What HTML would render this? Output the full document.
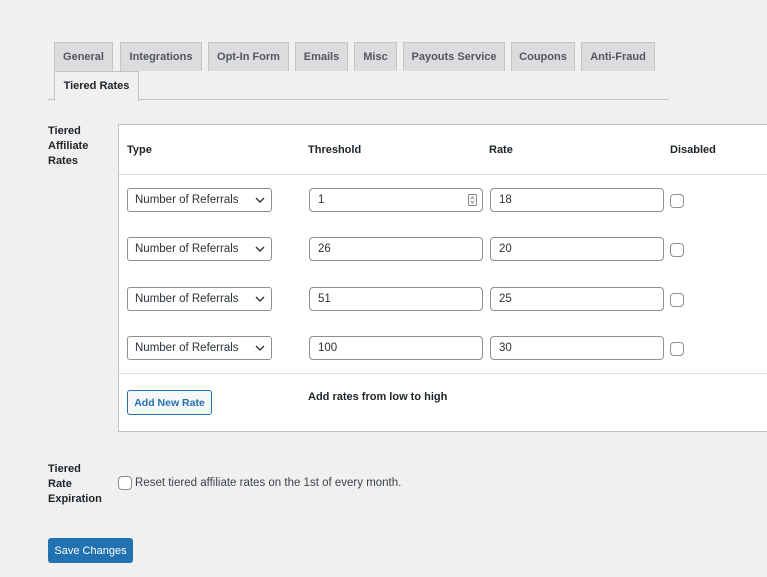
<!DOCTYPE html>
<html><head><meta charset="utf-8"><style>
*{box-sizing:border-box;margin:0;padding:0}
body{width:767px;height:577px;background:#f0f0f1;font-family:"Liberation Sans",sans-serif;color:#1d2327;position:relative;overflow:hidden;font-size:13px}
.a{position:absolute}
.tab{position:absolute;height:29px;background:#dcdcde;border:1px solid #c3c4c7;border-bottom:none;font-weight:bold;font-size:11px;color:#50575e;text-align:center;line-height:29px}
.tab.act{background:#f0f0f1;color:#1d2327;height:30px}
.lbl{position:absolute;font-weight:bold;font-size:11px;line-height:15px}
.th{position:absolute;font-weight:bold;font-size:11px;top:144px}
.inp{position:absolute;height:24px;background:#fff;border:1px solid #8c8f94;border-radius:4px;font-size:11.5px;line-height:23px;padding-left:8px;color:#2c3338}
.sel{position:absolute;height:24px;width:145px;left:127px;background:#fff;border:1px solid #8c8f94;border-radius:3px;font-size:11.5px;line-height:23px;padding-left:7px;color:#2c3338}
.sel svg{position:absolute;right:6px;top:8px}
.cb{position:absolute;width:14px;height:14px;border:1px solid #8c8f94;border-radius:4px;background:#fff;left:670px}
</style></head><body>
<div class="tab" style="left:54px;top:42px;width:59px">General</div>
<div class="tab" style="left:120px;top:42px;width:82px">Integrations</div>
<div class="tab" style="left:208px;top:42px;width:81px">Opt-In Form</div>
<div class="tab" style="left:295px;top:42px;width:53px">Emails</div>
<div class="tab" style="left:354px;top:42px;width:43px">Misc</div>
<div class="tab" style="left:403px;top:42px;width:102px">Payouts Service</div>
<div class="tab" style="left:511px;top:42px;width:64px">Coupons</div>
<div class="tab" style="left:581px;top:42px;width:74px">Anti-Fraud</div>
<div class="a" style="left:48px;top:99px;width:621px;height:1px;background:#c3c4c7"></div>
<div class="tab act" style="left:54px;top:71px;width:85px;color:#1d2327">Tiered Rates</div>

<div class="lbl" style="left:48px;top:124px">Tiered<br>Affiliate<br>Rates</div>
<div class="a" style="left:118px;top:124px;width:660px;height:308px;background:#fff;border:1px solid #c3c4c7"></div>
<div class="a" style="left:119px;top:174px;width:660px;height:1px;background:#dcdcde"></div>
<div class="a" style="left:119px;top:373px;width:660px;height:1px;background:#dcdcde"></div>
<div class="th" style="left:127px">Type</div>
<div class="th" style="left:308px">Threshold</div>
<div class="th" style="left:489px">Rate</div>
<div class="th" style="left:670px">Disabled</div>

<div class="sel" style="top:188px">Number of Referrals<svg width="10" height="7"><path d="M1 1l4 4 4-4" fill="none" stroke="#2c3338" stroke-width="1.4"/></svg></div>
<div class="inp" style="left:309px;top:188px;width:174px">1<svg class="a" style="right:5px;top:5px" width="9" height="12"><rect x=".5" y=".5" width="8" height="11" rx="1" fill="none" stroke="#888"/><path d="M2.5 5l2-2 2 2M2.5 7l2 2 2-2" fill="none" stroke="#888"/></svg></div>
<div class="inp" style="left:490px;top:188px;width:174px">18</div>
<div class="cb" style="top:194px"></div>

<div class="sel" style="top:237px">Number of Referrals<svg width="10" height="7"><path d="M1 1l4 4 4-4" fill="none" stroke="#2c3338" stroke-width="1.4"/></svg></div>
<div class="inp" style="left:309px;top:237px;width:174px">26</div>
<div class="inp" style="left:490px;top:237px;width:174px">20</div>
<div class="cb" style="top:243px"></div>

<div class="sel" style="top:287px">Number of Referrals<svg width="10" height="7"><path d="M1 1l4 4 4-4" fill="none" stroke="#2c3338" stroke-width="1.4"/></svg></div>
<div class="inp" style="left:309px;top:287px;width:174px">51</div>
<div class="inp" style="left:490px;top:287px;width:174px">25</div>
<div class="cb" style="top:293px"></div>

<div class="sel" style="top:336px">Number of Referrals<svg width="10" height="7"><path d="M1 1l4 4 4-4" fill="none" stroke="#2c3338" stroke-width="1.4"/></svg></div>
<div class="inp" style="left:309px;top:336px;width:174px">100</div>
<div class="inp" style="left:490px;top:336px;width:174px">30</div>
<div class="cb" style="top:342px"></div>

<div class="a" style="left:127px;top:390px;width:85px;height:25px;border:1px solid #2271b1;border-radius:3px;background:#f6f7f7;color:#2271b1;font-weight:bold;font-size:10.5px;text-align:center;line-height:24px">Add New Rate</div>
<div class="a" style="left:308px;top:391px;font-weight:bold;font-size:11px">Add rates from low to high</div>

<div class="lbl" style="left:48px;top:462px">Tiered<br>Rate<br>Expiration</div>
<div class="a" style="left:118px;top:476px;width:14px;height:14px;border:1px solid #8c8f94;border-radius:4px;background:#fff"></div>
<div class="a" style="left:135px;top:477px;font-size:11.5px;color:#3c434a">Reset tiered affiliate rates on the 1st of every month.</div>

<div class="a" style="left:48px;top:538px;width:85px;height:25px;background:#2271b1;border-radius:3px;color:#fff;font-size:11px;text-align:center;line-height:26px">Save Changes</div>
</body></html>
